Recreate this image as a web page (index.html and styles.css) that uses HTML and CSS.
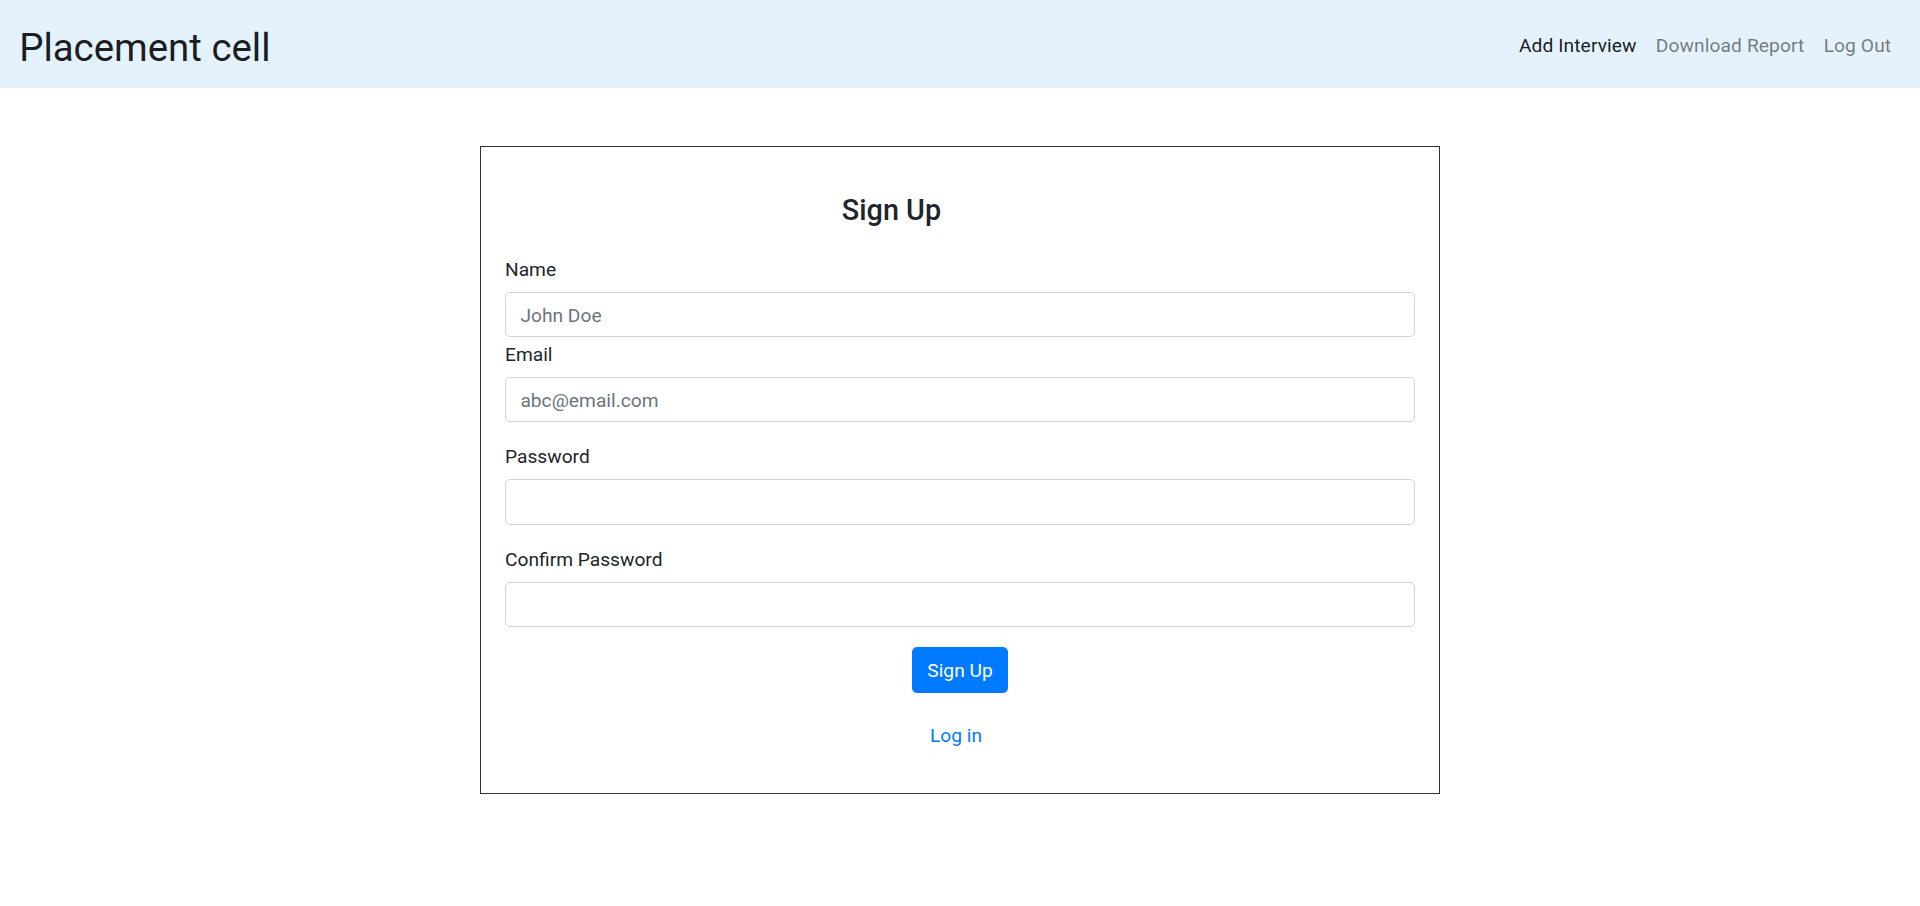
FILE: index.html
```html
<!DOCTYPE html>
<html lang="en">
<head>
<meta charset="utf-8">
<title>Placement cell</title>
<link rel="stylesheet" href="styles.css">
</head>
<body>
<nav class="navbar">
  <a class="brand" href="#">Placement cell</a>
  <ul class="nav">
    <li><a class="nav-link active" href="#">Add Interview</a></li>
    <li><a class="nav-link" href="#">Download Report</a></li>
    <li><a class="nav-link" href="#">Log Out</a></li>
  </ul>
</nav>
<main class="card">
  <h4 class="title">Sign Up</h4>
  <form class="form">
    <div class="group group-name">
      <label class="label" for="name">Name</label>
      <input class="control" id="name" type="text" placeholder="John Doe">
    </div>
    <div class="group">
      <label class="label" for="email">Email</label>
      <input class="control" id="email" type="email" placeholder="abc@email.com">
    </div>
    <div class="group">
      <label class="label" for="pw">Password</label>
      <input class="control" id="pw" type="password">
    </div>
    <div class="group">
      <label class="label" for="cpw">Confirm Password</label>
      <input class="control" id="cpw" type="password">
    </div>
    <div class="actions">
      <button class="btn" type="button">Sign Up</button>
    </div>
    <div class="login">
      <a class="login-link" href="#">Log in</a>
    </div>
  </form>
</main>
</body>
</html>
```
FILE: styles.css
```css
* { box-sizing: border-box; }
html, body { margin: 0; padding: 0; }
body {
  font-family: Roboto, "Liberation Sans", sans-serif;
  font-size: 19.2px;
  line-height: 28.8px;
  color: #212529;
  background: #fff;
}
a { text-decoration: none; }

.navbar {
  height: 88px;
  background: #e3f2fd;
  display: flex;
  justify-content: space-between;
  align-items: flex-start;
  padding: 0 19.2px 0 19.2px;
}
.brand {
  margin-top: 24.5px;
  font-size: 38.4px;
  line-height: 46px;
  color: rgba(0,0,0,.9);
}
.nav {
  list-style: none;
  margin: 32px 0 0 0;
  padding: 0;
  display: flex;
}
.nav-link {
  display: block;
  padding: 0 9.6px;
  line-height: 28.8px;
  letter-spacing: 0.1px;
  color: rgba(0,0,0,.5);
}
.nav-link.active { color: rgba(0,0,0,.9); }

.card {
  width: 960px;
  margin: 58px auto 0;
  border: 1px solid #333;
  padding: 24px;
}
.title {
  margin: 22px 0 27.5px;
  padding-right: 137px;
  text-align: center;
  font-size: 28.8px;
  line-height: 34.56px;
  font-weight: 500;
}
.form { margin: 0; }
.group { margin-bottom: 20px; }
.group-name { margin-bottom: 2.5px; }
.label {
  display: block;
  line-height: 28.8px;
  padding-top: 1px;
  margin-bottom: 7px;
}
.control {
  display: block;
  width: 100%;
  height: 45.6px;
  padding: 8.2px 14.4px 6.2px;
  font-family: inherit;
  font-size: 19.2px;
  line-height: 28.8px;
  color: #495057;
  background: #fff;
  border: 1px solid #ced4da;
  border-radius: 4.8px;
  outline: none;
}
.control::placeholder { color: #6c757d; opacity: 1; }
.actions { text-align: center; }
.btn {
  height: 45.6px;
  padding: 8.2px 14.4px 6.2px;
  font-family: inherit;
  font-size: 19.2px;
  line-height: 28.8px;
  color: #fff;
  background: #007bff;
  border: 1px solid #007bff;
  border-radius: 4.8px;
}
.login {
  text-align: center;
  margin: 28.3px 0 18.2px;
  padding-top: 1px;
  padding-right: 8px;
  line-height: 28.8px;
}
.login-link { color: #007bff; }
```
